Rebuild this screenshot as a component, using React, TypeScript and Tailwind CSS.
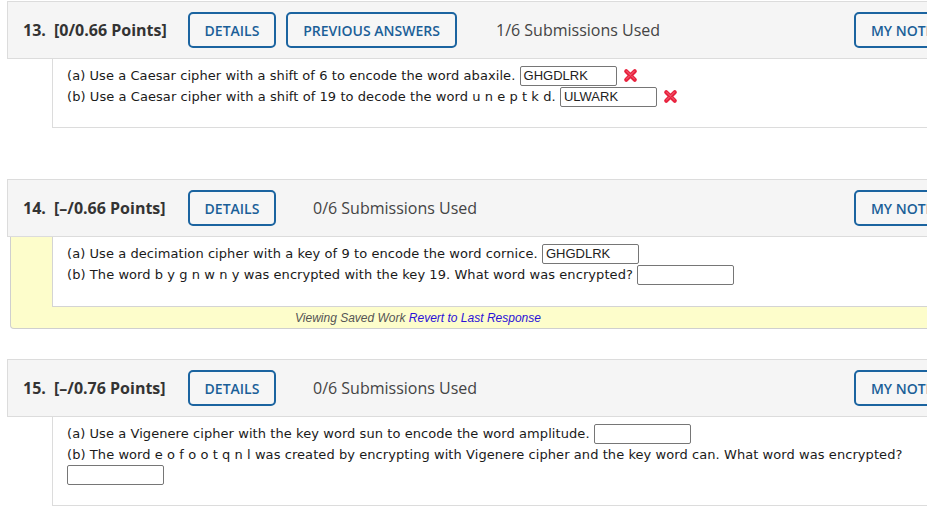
import React from 'react';

const headerFont = { fontFamily: '"Open Sans", "Noto Sans", sans-serif' };
const bodyFont = { fontFamily: '"DejaVu Sans", Verdana, sans-serif' };

function WrongMark() {
    return (
        <svg width="15" height="15" viewBox="0 0 14 14" className="inline-block align-middle ml-[6px]">
            <path d="M3 3 L11 11 M11 3 L3 11" stroke="#e8223e" strokeWidth="3.8" strokeLinecap="round" />
            <path d="M3.4 3 L10.6 10.2 M10.6 3 L3.4 10.2" stroke="#f7798a" strokeWidth="1" strokeLinecap="round" opacity="0.6" />
        </svg>
    );
}

function Answer({ value = '' }: { value?: string }) {
    return (
        <span
            className="inline-flex items-center align-middle h-[20px] w-[97px] border border-[#767676] rounded-[2px] bg-white pl-[3px] text-[13px] text-[#222] leading-none tracking-normal"
            style={{ fontFamily: '"Liberation Sans", Arial, sans-serif' }}
        >
            {value}
        </span>
    );
}

function OutlineButton({ label, width }: { label: string; width: string }) {
    return (
        <button
            className={`${width} h-[36px] shrink-0 border-2 border-[#1b64a0] rounded-[5px] text-[#1b5f98] text-[14px] font-semibold bg-[#f6f6f6] whitespace-nowrap`}
            style={headerFont}
        >
            {label}
        </button>
    );
}

function QuestionHeader({ num, points, used, previous }: { num: string; points: string; used: string; previous?: boolean }) {
    return (
        <div className="h-[58px] bg-[#f5f5f5] border border-[#dcdcdc] flex items-center pl-[15px] pr-[21px]" style={headerFont}>
            <span className="text-[16px] font-bold text-[#333] w-[31px]">{num}</span>
            <span className="text-[16px] font-bold text-[#333] w-[134px]">{points}</span>
            <OutlineButton label="DETAILS" width="w-[88px]" />
            {previous && (
                <div className="ml-[10px]">
                    <OutlineButton label="PREVIOUS ANSWERS" width="w-[171px]" />
                </div>
            )}
            <span className={`${previous ? 'ml-[39px]' : 'ml-[37px]'} text-[16px] text-[#444]`}>{used}</span>
            <div className="ml-auto">
                <OutlineButton label="MY NOTES" width="w-[104px]" />
            </div>
        </div>
    );
}

export default function App() {
    return (
        <div className="w-[927px] h-[530px] overflow-hidden bg-white">
            <div className="w-[980px] pl-[7px] pt-[1px] flex flex-col">
                {/* 13 */}
                <div>
                    <QuestionHeader num="13." points="[0/0.66 Points]" used="1/6 Submissions Used" previous />
                    <div className="ml-[45px] h-[69px] border-l border-b border-[#dcdcdc] pl-[14px] pt-[6px] text-[13px] tracking-[0.07px] text-[#1a1a1a]" style={bodyFont}>
                        <div className="h-[21px] flex items-center whitespace-nowrap">
                            (a) Use a Caesar cipher with a shift of 6 to encode the word abaxile.&nbsp;<Answer value="GHGDLRK" />
                            <WrongMark />
                        </div>
                        <div className="h-[21px] flex items-center whitespace-nowrap">
                            (b) Use a Caesar cipher with a shift of 19 to decode the word u n e p t k d.&nbsp;<Answer value="ULWARK" />
                            <WrongMark />
                        </div>
                    </div>
                </div>

                {/* 14 */}
                <div className="mt-[51px]">
                    <QuestionHeader num="14." points="[–/0.66 Points]" used="0/6 Submissions Used" />
                    <div className="ml-[3px] bg-[#fdfdcb] border-l border-r border-b border-[#cfcfcf] rounded-bl-[4px]">
                        <div className="ml-[41px] h-[70px] bg-white border-l border-b border-[#d4d4d4] pl-[14px] pt-[6px] text-[13px] tracking-[0.07px] text-[#1a1a1a]" style={bodyFont}>
                            <div className="h-[21px] flex items-center whitespace-nowrap">
                                (a) Use a decimation cipher with a key of 9 to encode the word cornice.&nbsp;<Answer value="GHGDLRK" />
                            </div>
                            <div className="h-[21px] flex items-center whitespace-nowrap">
                                (b) The word b y g n w n y was encrypted with the key 19. What word was encrypted?&nbsp;<Answer />
                            </div>
                        </div>
                        <div
                            className="h-[21px] pl-[284px] flex items-center text-[12px] italic text-[#555]"
                            style={{ fontFamily: '"Liberation Sans", Arial, sans-serif' }}
                        >
                            Viewing Saved Work&nbsp;<span className="text-[#2a12d8]">Revert to Last Response</span>
                        </div>
                    </div>
                </div>

                {/* 15 */}
                <div className="mt-[30px]">
                    <QuestionHeader num="15." points="[–/0.76 Points]" used="0/6 Submissions Used" />
                    <div className="ml-[45px] h-[89px] border-l border-b border-[#dcdcdc] pl-[14px] pt-[6px] text-[13px] tracking-[0.07px] text-[#1a1a1a]" style={bodyFont}>
                        <div className="h-[21px] flex items-center whitespace-nowrap">
                            (a) Use a Vigenere cipher with the key word sun to encode the word amplitude.&nbsp;<Answer />
                        </div>
                        <div className="h-[21px] flex items-center whitespace-nowrap">
                            (b) The word e o f o o t q n l was created by encrypting with Vigenere cipher and the key word can. What word was encrypted?
                        </div>
                        <div className="h-[20px] flex items-center">
                            <Answer />
                        </div>
                    </div>
                </div>
            </div>
        </div>
    );
}
